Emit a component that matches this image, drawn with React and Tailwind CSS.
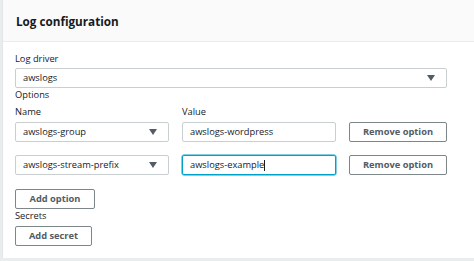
import React from "react";

function Caret() {
  return (
    <svg width="8" height="6" viewBox="0 0 8 6" className="shrink-0">
      <path d="M0 0 L8 0 L4 6 Z" fill="#545b64" />
    </svg>
  );
}

function Select({ value, className = "" }) {
  return (
    <div
      className={`h-[20px] flex items-center justify-between pl-[7px] pr-[11px] border border-[#c9cfd0] rounded-[2px] bg-white text-[#16191f] ${className}`}
    >
      <span>{value}</span>
      <Caret />
    </div>
  );
}

function Button({ children, className = "" }) {
  return (
    <div
      className={`h-[20px] flex items-center justify-center border border-[#7d8689] rounded-[2px] bg-white font-bold text-[#545b64] ${className}`}
    >
      {children}
    </div>
  );
}

export default function App() {
  return (
    <div
      className="w-[474px] h-[261px] bg-[#eaeded] overflow-hidden text-[9.3px] leading-[12px] text-[#16191f]"
      style={{ fontFamily: '"Open Sans", "Noto Sans", sans-serif' }}
    >
      <div className="ml-[2px] h-[258px] bg-white border-l border-[#e3e6e6] flex flex-col">
        <div className="h-[42px] shrink-0 bg-[#fafafa] border-b border-[#eaeded] flex items-center pl-[13px]">
          <span className="text-[11.7px] font-bold text-[#16191f]">Log configuration</span>
        </div>
        <div className="pl-[12px] pt-[11px] flex flex-col">
          <div>Log driver</div>
          <Select value="awslogs" className="mt-[3px] w-[432px]" />
          <div className="mt-[1px]">Options</div>
          <div className="mt-[5px] flex">
            <div className="w-[167px]">Name</div>
            <div>Value</div>
          </div>
          <div className="mt-[4px] flex gap-[13px] items-center">
            <Select value="awslogs-group" className="w-[154px]" />
            <div className="w-[154px] h-[20px] flex items-center pl-[7px] border border-[#c9cfd0] rounded-[2px]">
              awslogs-wordpress
            </div>
            <Button className="w-[98px]">Remove option</Button>
          </div>
          <div className="mt-[13px] flex gap-[13px] items-center">
            <Select value="awslogs-stream-prefix" className="w-[154px]" />
            <div className="w-[154px] h-[20px] flex items-center pl-[7px] border border-[#00a1c9] rounded-[2px] shadow-[0_0_0_0.5px_#00a1c9]">
              awslogs-example<span className="inline-block w-px h-[11px] bg-[#16191f]" />
            </div>
            <Button className="w-[98px]">Remove option</Button>
          </div>
          <Button className="mt-[14px] w-[80px]">Add option</Button>
          <div className="mt-[1px]">Secrets</div>
          <Button className="mt-[4px] w-[77px]">Add secret</Button>
        </div>
      </div>
    </div>
  );
}
